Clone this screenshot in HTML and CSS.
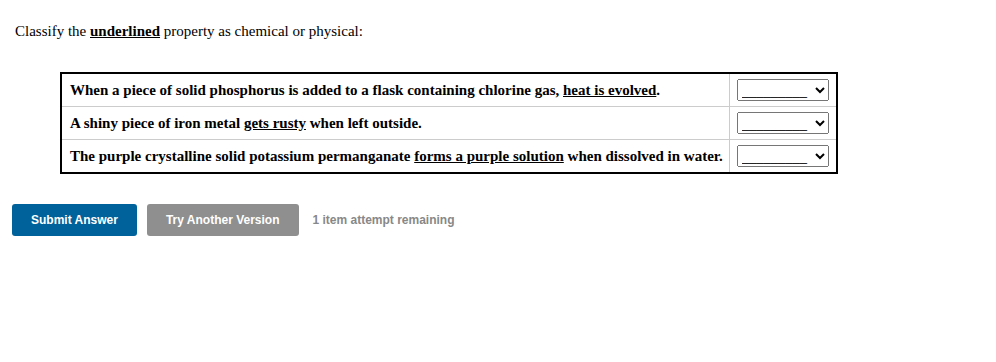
FILE: index.html
```html
<!DOCTYPE html>
<html>
  <head>
    <meta name="viewport" content="width=device-width, initial-scale=1" />
    <link rel="stylesheet" href="styles.css">
  </head>
  <body>
    <main class="question">
      <p class="prompt">Classify the <b><u>underlined</u></b> property as chemical or physical:</p>

      <table class="items">
        <tr>
          <td class="statement">When a piece of solid phosphorus is added to a flask containing chlorine gas, <u>heat is evolved</u>.</td>
          <td class="answer">
            <select><option>_________</option><option>chemical</option><option>physical</option></select>
          </td>
        </tr>
        <tr>
          <td class="statement">A shiny piece of iron metal <u>gets rusty</u> when left outside.</td>
          <td class="answer">
            <select><option>_________</option><option>chemical</option><option>physical</option></select>
          </td>
        </tr>
        <tr>
          <td class="statement">The purple crystalline solid potassium permanganate <u>forms a purple solution</u> when dissolved in water.</td>
          <td class="answer">
            <select><option>_________</option><option>chemical</option><option>physical</option></select>
          </td>
        </tr>
      </table>

      <div class="controls">
        <button class="btn btn-submit">Submit Answer</button>
        <button class="btn btn-retry">Try Another Version</button>
        <span class="attempts">1 item attempt remaining</span>
      </div>
    </main>
  </body>
</html>
```

FILE: styles.css
```css
body {
  margin: 0;
  background: #fff;
  color: #000;
  font-family: "Liberation Serif", "Times New Roman", serif;
}

.question {
  padding: 0 12px;
}

.prompt {
  margin: 0;
  padding: 23px 0 0 3px;
  font-size: 15px;
  line-height: 17px;
}

.items {
  margin: 32px 0 0 48px;
  border: 2px solid #000;
  border-collapse: collapse;
}

.items td {
  border-top: 1px solid #ccc;
  font-size: 15px;
  font-weight: bold;
  vertical-align: middle;
}

.items tr:first-child td {
  border-top: none;
}

.statement {
  padding: 5px 6px 5px 8px;
  white-space: nowrap;
}

.answer {
  padding: 5px 7px;
  border-left: 1px solid #ccc;
}

.answer select {
  width: 92px;
  height: 22px;
  font-family: "Liberation Sans", Arial, sans-serif;
  font-size: 13px;
}

.controls {
  display: flex;
  align-items: center;
  gap: 10px;
  margin-top: 30px;
}

.btn {
  height: 32px;
  padding: 0 19px;
  border: none;
  border-radius: 3px;
  color: #fff;
  font-family: "Liberation Sans", Arial, sans-serif;
  font-size: 12px;
  font-weight: bold;
}

.btn-submit {
  background: #00629b;
}

.btn-retry {
  background: #8f8f8f;
}

.attempts {
  margin-left: 4px;
  color: #888;
  font-family: "Liberation Sans", Arial, sans-serif;
  font-size: 12px;
  font-weight: bold;
}
```
